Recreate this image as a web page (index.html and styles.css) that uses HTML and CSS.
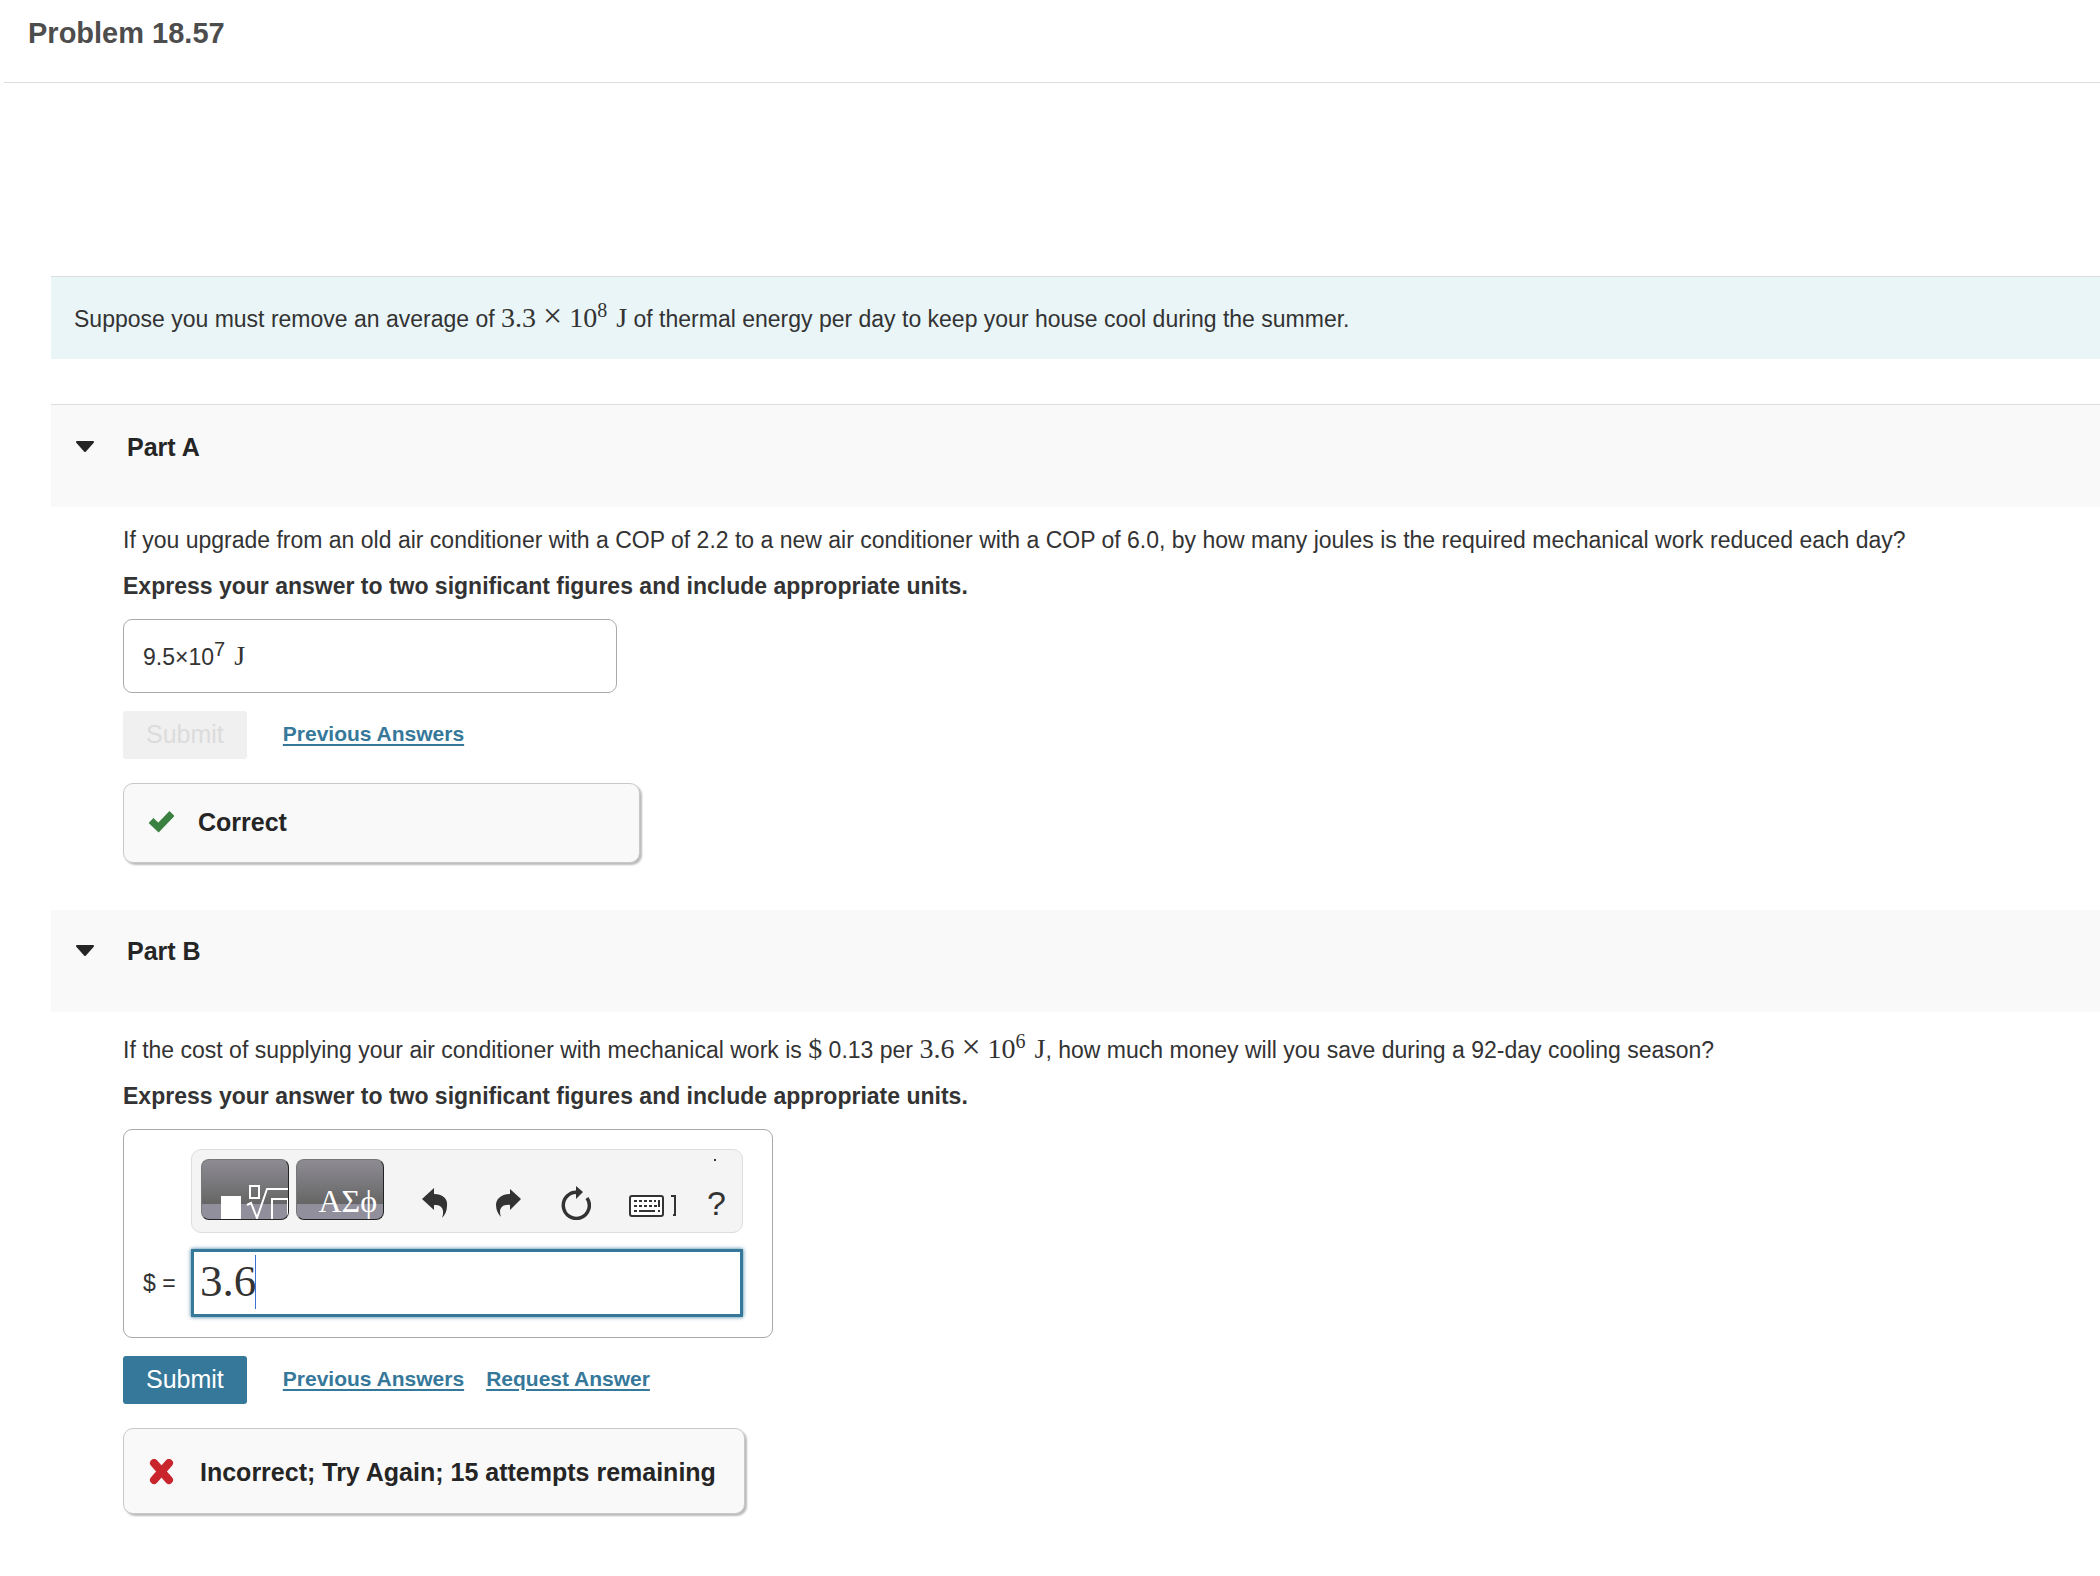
FILE: index.html
```html
<!DOCTYPE html>
<html lang="en">
<head>
  <meta charset="UTF-8" />
  <meta name="viewport" content="width=device-width, initial-scale=1.0" />
  <title>Problem 18.57</title>
  <link rel="stylesheet" href="styles.css">
</head>
<body>
  <header class="page-header">
    <h1>Problem 18.57</h1>
  </header>

  <main class="problem">
    <section class="intro">
      <p>Suppose you must remove an average of <span class="math">3.3<span class="times">×</span>10<sup>8</sup><span class="unit">J</span></span> of thermal energy per day to keep your house cool during the summer.</p>
    </section>

    <section class="part">
      <div class="part-header part-header-first">
        <svg class="caret" viewBox="0 0 20 12"><path d="M2 1h16L10 10z" /></svg>
        <h2>Part A</h2>
      </div>
      <div class="part-body">
        <p class="question">If you upgrade from an old air conditioner with a COP of 2.2 to a new air conditioner with a COP of 6.0, by how many joules is the required mechanical work reduced each day?</p>
        <p class="instructions">Express your answer to two significant figures and include appropriate units.</p>
        <div class="answer answer-done">
          <span>9.5×10<sup>7</sup><span class="unit">J</span></span>
        </div>
        <div class="actions">
          <button class="submit" type="button" disabled>Submit</button>
          <a href="#">Previous Answers</a>
        </div>
        <div class="feedback feedback-correct">
          <svg class="mark mark-ok" viewBox="0 0 26 22"><path d="M3 9.500L10.500 16.500L24 2.500" /></svg>
          <span>Correct</span>
        </div>
      </div>
    </section>

    <section class="part">
      <div class="part-header">
        <svg class="caret" viewBox="0 0 20 12"><path d="M2 1h16L10 10z" /></svg>
        <h2>Part B</h2>
      </div>
      <div class="part-body part-body-b">
        <p class="question">If the cost of supplying your air conditioner with mechanical work is <span class="math">$</span> 0.13 per <span class="math">3.6<span class="times">×</span>10<sup>6</sup><span class="unit">J</span></span>, how much money will you save during a 92-day cooling season?</p>
        <p class="instructions">Express your answer to two significant figures and include appropriate units.</p>
        <form class="answer answer-edit">
          <div class="toolbar">
            <button class="palette" type="button" aria-label="Templates">
              <svg viewBox="0 0 86 58">
                <rect x="20" y="36" width="18" height="22" fill="#fff" />
                <rect x="48" y="25" width="9" height="12" />
                <path d="M45 44l4-2 6 15 10-29h21M70 58V38h16v20" />
              </svg>
            </button>
            <button class="palette palette-symbols" type="button">ΑΣϕ</button>
            <div class="tools">
              <button class="undo" type="button" aria-label="Undo">
                <svg width="26" height="30" viewBox="0 0 26 30"><path d="M0 11L12 0v6C22 6 26 12 25 18c0 5-2 9-5 12 3-8 0-14-8-13v5z" /></svg>
              </button>
              <button type="button" aria-label="Redo">
                <svg width="25" height="30" viewBox="0 0 25 30"><path d="M25 11L14 1v5C4 6 0 12 0 17c0 5 2 9 5 12-3-8 1-13 9-12v5z" /></svg>
              </button>
              <button class="reset" type="button" aria-label="Reset">
                <svg width="30" height="34" viewBox="0 0 30 34"><path d="M17 6.500A13 13 0 1 0 26 12" fill="none" stroke="#333" stroke-width="3.500" /><path d="M15 0v13l7-7z" /></svg>
              </button>
              <button class="keys" type="button" aria-label="Keyboard shortcuts">
                <svg width="48" height="22" viewBox="0 0 48 22">
                  <rect x="1" y="1" width="33" height="20" rx="2" fill="#fff" stroke="#333" stroke-width="2" />
                  <path d="M5 6h22M5 11h24M5 16h3M29 16h2" fill="none" stroke="#333" stroke-width="2" stroke-dasharray="3 2" />
                  <path d="M10 16h16M30 5v7" fill="none" stroke="#333" stroke-width="2" />
                  <path d="M42 1h4v19h-2" fill="none" stroke="#333" stroke-width="2" />
                </svg>
              </button>
              <button class="help" type="button">?</button>
            </div>
            <span class="speck"></span>
          </div>
          <label for="amount">$ =</label>
          <div class="field">
            <input id="amount" type="text" value="3.6" autocomplete="off" />
            <span class="cursor"></span>
          </div>
        </form>
        <div class="actions">
          <button class="submit" type="button">Submit</button>
          <a href="#">Previous Answers</a>
          <a href="#">Request Answer</a>
        </div>
        <div class="feedback feedback-wrong">
          <svg class="mark mark-bad" viewBox="0 0 26 26"><path d="M6 4l15 17M21 4L6 21" /></svg>
          <span>Incorrect; Try Again; 15 attempts remaining</span>
        </div>
      </div>
    </section>
  </main>
</body>
</html>
```
FILE: styles.css
```css
:root {
  --text: #333;
  --dark: #252525;
  --blue: #36789a;
  --line: #ddd;
  --panel: #f9f9f9;
}

* {
  box-sizing: border-box;
}

body {
  margin: 0;
  font-family: "Liberation Sans", Arial, sans-serif;
  font-size: 23px;
  line-height: 34px;
  color: var(--text);
  background: #fff;
}

h1,
h2,
p {
  margin: 0;
}

sup {
  font-size: 20px;
  line-height: 0;
}

button {
  font-family: inherit;
  padding: 0;
  border: none;
  background: none;
}

.page-header {
  margin-left: 4px;
  padding: 16px 24px 32px;
  border-bottom: 1px solid var(--line);
}

.page-header h1 {
  font-size: 29px;
  line-height: 34px;
  color: #4d4d4d;
}

.problem {
  padding: 193px 0 64px 51px;
}

.intro {
  padding: 25px 23px 23px;
  background: #eaf5f8;
  border-top: 1px solid var(--line);
}

.math,
.unit {
  font-family: "Liberation Serif", "Times New Roman", serif;
  font-size: 28px;
  line-height: 0;
}

.times {
  margin: 0 7px;
  font-size: 34px;
}

.unit {
  margin-left: 9px;
}

.part-header {
  display: flex;
  align-items: flex-start;
  gap: 32px;
  height: 102px;
  padding: 24px;
  background: var(--panel);
}

.part-header-first {
  height: 103px;
  margin-top: 45px;
  padding-top: 25px;
  border-top: 1px solid var(--line);
}

.part-header h2 {
  font-size: 25px;
  line-height: 34px;
  color: var(--dark);
}

.caret {
  width: 20px;
  height: 12px;
  margin-top: 11px;
  fill: var(--dark);
  stroke: var(--dark);
  stroke-width: 2;
  stroke-linejoin: round;
}

.part-body {
  padding: 16px 24px 47px 72px;
}

.part-body-b {
  padding-top: 21px;
}

.instructions {
  margin-top: 12px;
  font-weight: bold;
}

.answer {
  margin-top: 16px;
  border: 1px solid #aaa;
  border-radius: 9px;
}

.answer-done {
  max-width: 494px;
  padding: 20px 19px 18px;
}

.answer-edit {
  display: grid;
  grid-template-columns: 48px 1fr;
  align-items: center;
  row-gap: 16px;
  max-width: 650px;
  padding: 19px 29px 20px 19px;
}

.toolbar {
  position: relative;
  grid-column: 2;
  display: flex;
  gap: 7px;
  height: 84px;
  padding: 9px;
  background: #f4f4f4;
  border: 1px solid var(--line);
  border-radius: 10px;
}

.palette {
  width: 88px;
  height: 61px;
  overflow: hidden;
  border: 1px solid #222;
  border-top-color: #777;
  border-left-color: #777;
  border-radius: 8px;
  background: linear-gradient(#8e8c93, #656565 75%, #918f9b 75%);
}

.palette svg {
  display: block;
  width: 86px;
  height: 58px;
  fill: none;
  stroke: #fff;
  stroke-width: 2;
}

.palette-symbols {
  padding: 22px 6px 0 0;
  font-family: "Liberation Serif", serif;
  font-size: 32px;
  line-height: 34px;
  text-align: right;
  color: #fff;
}

.tools {
  display: flex;
  align-items: center;
  gap: 38px;
  margin-left: 31px;
  padding-top: 24px;
}

.tools svg {
  display: block;
  fill: var(--text);
}

.undo {
  width: 36px;
}

.reset {
  padding-left: 2px;
}

.keys {
  padding-top: 6px;
}

.help {
  margin-left: -8px;
  font-size: 34px;
  line-height: 34px;
  color: var(--text);
}

.speck {
  position: absolute;
  top: 9px;
  right: 26px;
  width: 2px;
  height: 2px;
  background: var(--text);
}

.field {
  position: relative;
}

.field input {
  display: block;
  width: 100%;
  height: 68px;
  padding: 0 6px 4px;
  font-family: "Liberation Serif", "Times New Roman", serif;
  font-size: 45px;
  color: var(--text);
  border: 3px solid var(--blue);
  outline: none;
  box-shadow: 0 0 4px var(--blue);
}

.cursor {
  position: absolute;
  top: 6px;
  left: 64px;
  width: 1px;
  height: 54px;
  background: #3b6fd0;
}

.actions {
  display: flex;
  align-items: center;
  gap: 22px;
  margin-top: 18px;
}

.actions a {
  padding-bottom: 2px;
  font-size: 21px;
  font-weight: bold;
  color: var(--blue);
  text-underline-offset: 3px;
}

.submit {
  height: 48px;
  margin-right: 14px;
  padding: 0 23px 2px;
  font-size: 25px;
  color: #fff;
  background: var(--blue);
  border-radius: 3px;
}

.submit:disabled {
  color: #dcdcdc;
  background: #f0f0f0;
}

.feedback {
  display: flex;
  align-items: center;
  width: fit-content;
  margin-top: 24px;
  padding: 21px 24px 23px;
  gap: 24px;
  font-size: 25px;
  font-weight: bold;
  color: var(--dark);
  background: var(--panel);
  border: 1px solid #c8c8c8;
  border-radius: 10px;
  box-shadow: 2px 2px 2px #bbb;
}

.feedback-correct {
  width: 100%;
  max-width: 517px;
}

.feedback-wrong {
  gap: 26px;
  padding: 26px 28px 24px 24px;
}

.mark {
  width: 26px;
  fill: none;
  stroke-width: 7;
}

.mark-ok {
  stroke: #3a8040;
}

.mark-bad {
  stroke: #c9252d;
  stroke-width: 8;
  stroke-linecap: round;
}
```
